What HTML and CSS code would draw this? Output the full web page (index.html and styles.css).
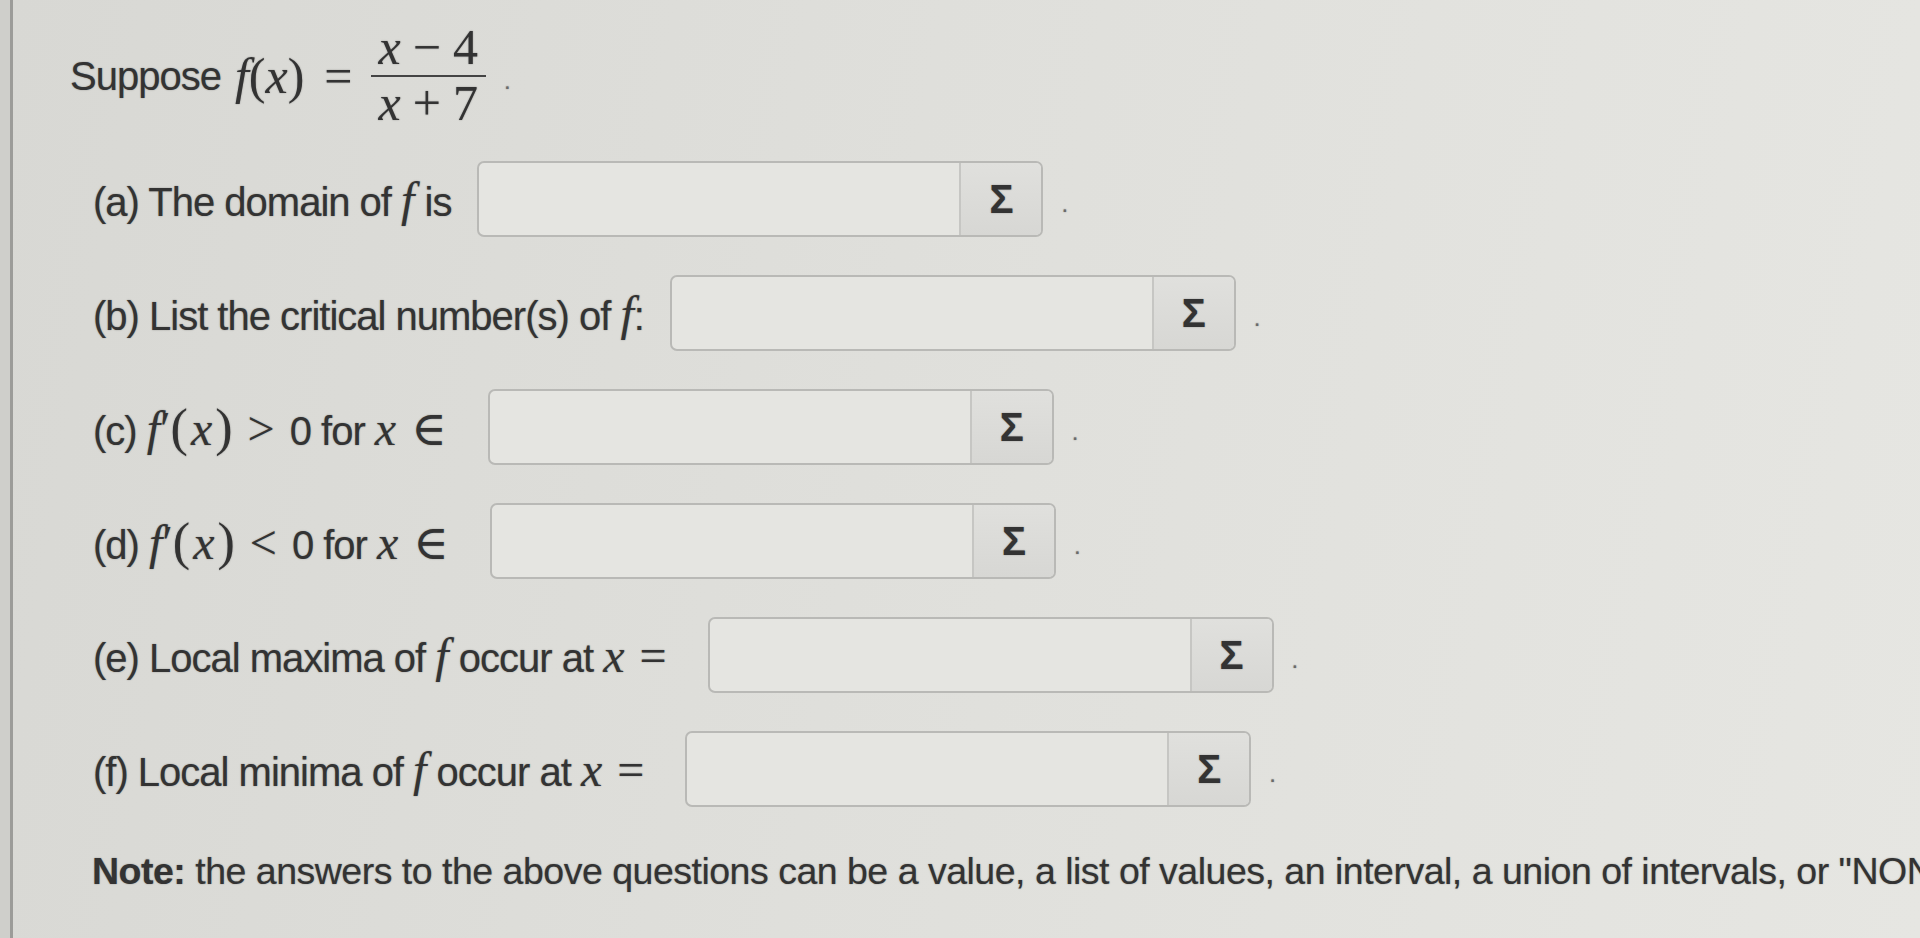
FILE: index.html
```html
<!DOCTYPE html>
<html lang="en">
<head>
<meta charset="utf-8">
<title>Critical numbers</title>
<link rel="stylesheet" href="styles.css">
</head>
<body>
<div class="page">
  <div class="title">
    <span class="txt">Suppose</span>
    <span class="math"><i class="mi">f</i><span class="mo">(</span><i class="mi">x</i><span class="mo">)</span></span>
    <span class="mo eq">=</span>
    <span class="frac">
      <span class="num"><i class="mi">x</i><span class="mo bin">−</span><span class="mn">4</span></span>
      <span class="den"><i class="mi">x</i><span class="mo bin">+</span><span class="mn">7</span></span>
    </span><span class="dot small">.</span>
  </div>

  <div class="rows">
    <div class="row">
      <span class="label">(a) The domain of <i class="mi">f</i> is</span>
      <div class="box"><div class="field"></div><div class="sigma">Σ</div></div>
      <span class="dot">.</span>
    </div>
    <div class="row">
      <span class="label">(b) List the critical number(s) of <i class="mi">f</i>:</span>
      <div class="box"><div class="field"></div><div class="sigma">Σ</div></div>
      <span class="dot">.</span>
    </div>
    <div class="row">
      <span class="label">(c) <i class="mi">f</i><span class="mo">′</span><span class="mo paren">(</span><i class="mi">x</i><span class="mo paren">)</span><span class="mo rel">&gt;</span>0 for <i class="mi">x</i><span class="mo rel">∈</span></span>
      <div class="box"><div class="field"></div><div class="sigma">Σ</div></div>
      <span class="dot">.</span>
    </div>
    <div class="row">
      <span class="label">(d) <i class="mi">f</i><span class="mo">′</span><span class="mo paren">(</span><i class="mi">x</i><span class="mo paren">)</span><span class="mo rel">&lt;</span>0 for <i class="mi">x</i><span class="mo rel">∈</span></span>
      <div class="box"><div class="field"></div><div class="sigma">Σ</div></div>
      <span class="dot">.</span>
    </div>
    <div class="row">
      <span class="label">(e) Local maxima of <i class="mi">f</i> occur at <i class="mi">x</i><span class="mo rel">=</span></span>
      <div class="box"><div class="field"></div><div class="sigma">Σ</div></div>
      <span class="dot">.</span>
    </div>
    <div class="row">
      <span class="label">(f) Local minima of <i class="mi">f</i> occur at <i class="mi">x</i><span class="mo rel">=</span></span>
      <div class="box"><div class="field"></div><div class="sigma">Σ</div></div>
      <span class="dot">.</span>
    </div>
  </div>

  <div class="note"><b>Note:</b> the answers to the above questions can be a value, a list of values, an interval, a union of intervals, or "NONE".</div>
</div>
</body>
</html>
```

FILE: styles.css
```css
html, body {
  margin: 0;
  padding: 0;
  height: 100%;
  overflow: hidden;
  background: #cfcfcb;
}

.page {
  margin-left: 10px;
  border-left: 3px solid #9c9c99;
  height: 100%;
  box-sizing: border-box;
  background: linear-gradient(100deg, #d8d8d4 0%, #dfdfdb 45%, #e6e6e2 100%);
  font-family: "Liberation Sans", Arial, sans-serif;
  color: #333333;
  font-size: 40px;
  letter-spacing: -1px;
  text-shadow: 0 0 1.5px rgba(30, 30, 30, 0.45);
  padding-top: 28px;
  overflow: hidden;
}

.title {
  display: flex;
  align-items: center;
  padding-left: 57px;
  height: 96px;
  white-space: nowrap;
}

.title .txt { margin-right: 14px; }

.mi {
  font-family: "Liberation Serif", "DejaVu Serif", serif;
  font-style: italic;
  font-size: 48px;
  letter-spacing: 0;
}

.mo, .mn {
  font-family: "Liberation Serif", "DejaVu Serif", serif;
  font-style: normal;
  font-size: 48px;
  letter-spacing: 0;
}

.paren { font-size: 52px; }
.paren:first-of-type { margin-left: 8px; }
.mo.paren + .mi { margin: 0 3px; }

.title .mi, .title .mo, .title .mn { font-size: 50px; }

.eq { margin: 0 18px 0 20px; }
.bin { margin: 0 12px; }
.rel { margin: 0 15px; }

.frac {
  display: inline-flex;
  flex-direction: column;
  align-items: center;
}

.num, .den {
  display: block;
  padding: 0 8px;
  line-height: 46px;
}

.num { border-bottom: 2px solid #444; padding-bottom: 2px; }
.den { padding-top: 3px; }

.small { font-size: 20px; color: #777; align-self: center; margin-left: 4px; padding-top: 8px; }

.rows {
  display: flex;
  flex-direction: column;
  gap: 36px;
  padding-left: 80px;
  margin-top: 36px;
}

.row {
  display: flex;
  align-items: center;
  height: 78px;
  white-space: nowrap;
}

.label { margin-right: 26px; }

.box {
  display: flex;
  width: 566px;
  height: 76px;
  box-sizing: border-box;
  border: 2px solid #b9b9b6;
  border-radius: 7px;
  background: #e5e5e1;
  overflow: hidden;
  flex-shrink: 0;
}

.field { flex: 1; }

.sigma {
  width: 80px;
  border-left: 2px solid #c6c6c3;
  background: linear-gradient(180deg, #e0e0dd 0%, #d7d7d4 100%);
  display: flex;
  align-items: center;
  justify-content: center;
  font-family: "Liberation Sans", "DejaVu Sans", sans-serif;
  font-weight: bold;
  font-size: 40px;
  letter-spacing: 0;
  color: #333;
}

.dot {
  color: #6a6a6a;
  font-size: 24px;
  margin-left: 18px;
  padding-top: 10px;
}

.note {
  margin-top: 42px;
  padding-left: 79px;
  font-size: 37.5px;
  letter-spacing: -0.5px;
  white-space: nowrap;
}

.note b { font-weight: bold; }
```
